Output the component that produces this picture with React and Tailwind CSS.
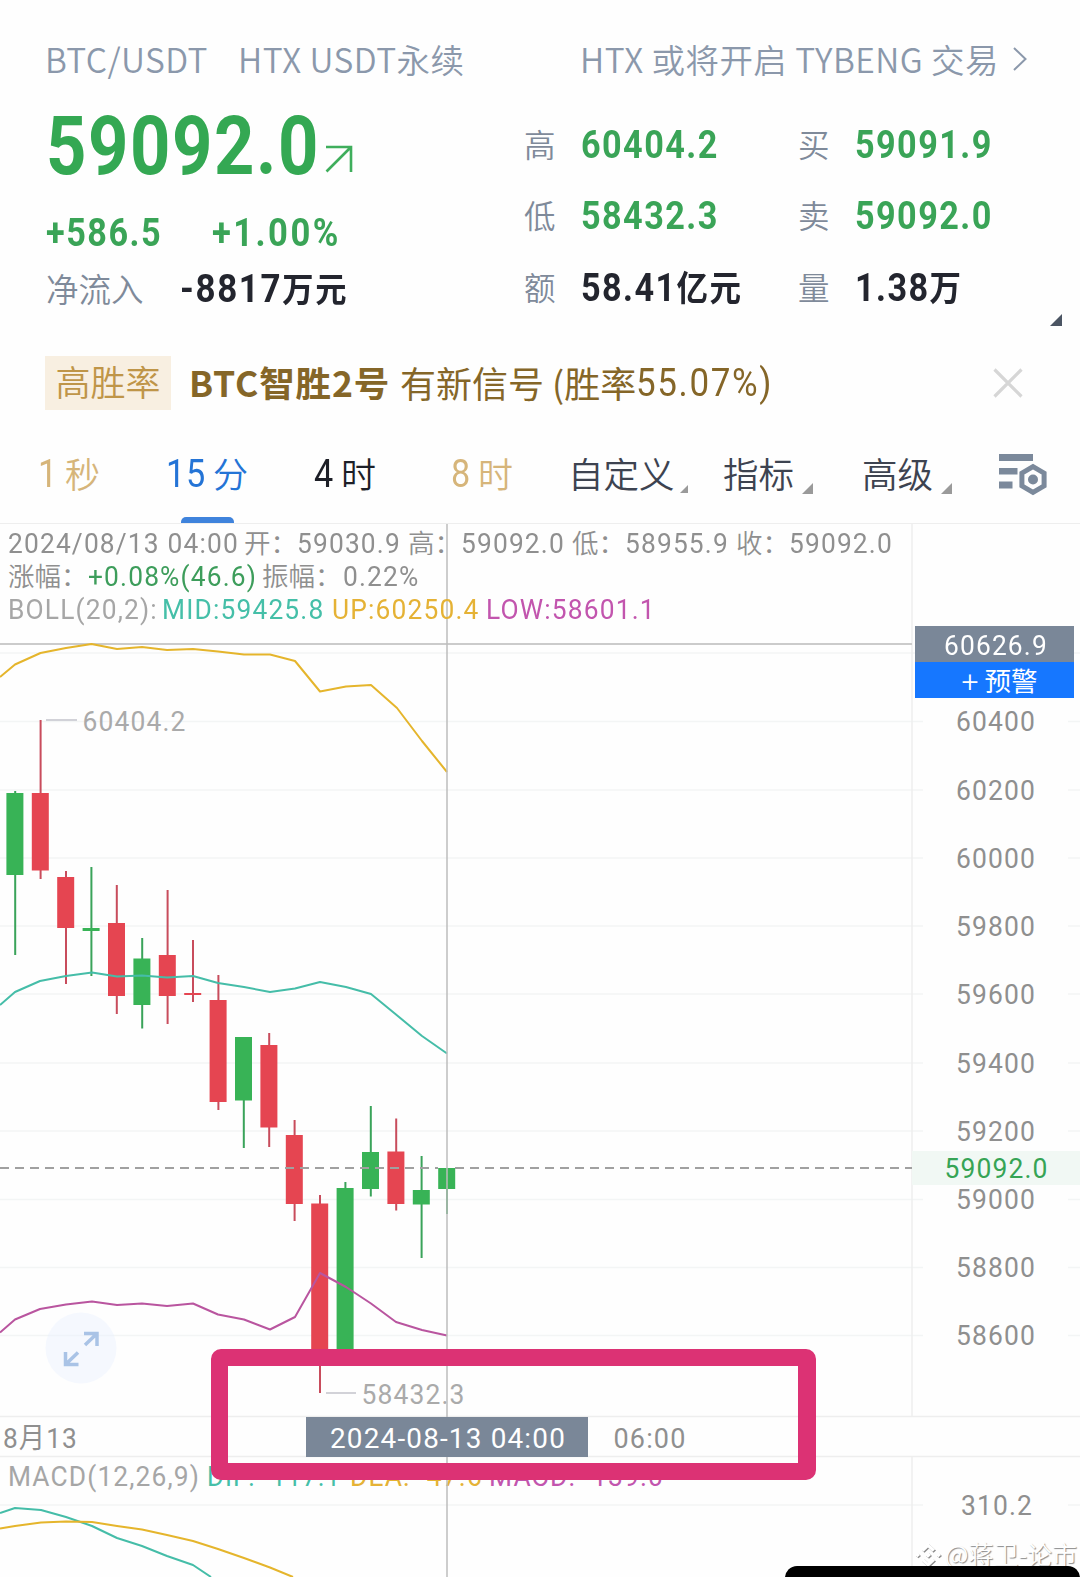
const NUM = "font-['Roboto','Noto_Sans_CJK_SC',sans-serif]";
const COND = "inline-block origin-left scale-x-[.94] tracking-[1.25px] font-normal";

const STEP = 25.4;
const candles = [
  ["g", 791, 955, 793, 875],
  ["r", 720, 879, 793, 870.5],
  ["r", 871, 984, 877, 928],
  ["g", 867, 976, 928, 931],
  ["r", 885, 1014, 923, 996],
  ["g", 938, 1028.5, 958.5, 1005],
  ["r", 890, 1024, 955, 996],
  ["r", 940, 1002, 993, 995],
  ["r", 975, 1110, 1000, 1102],
  ["g", 1037, 1148, 1037, 1100.5],
  ["r", 1033, 1147, 1045, 1127.5],
  ["r", 1120, 1221, 1135, 1204],
  ["r", 1195, 1393, 1203.5, 1352],
  ["g", 1182, 1352, 1188, 1352],
  ["g", 1106, 1196.5, 1152, 1189],
  ["r", 1118.5, 1210.5, 1151.5, 1204],
  ["g", 1156, 1258, 1190, 1204.5],
  ["g", 1168, 1214, 1168, 1189],
];

const axis = [
  ["60400", 721.5],
  ["60200", 790],
  ["60000", 858],
  ["59800", 926],
  ["59600", 994],
  ["59400", 1063],
  ["59200", 1131],
  ["59000", 1199.5],
  ["58800", 1267.5],
  ["58600", 1335.5],
];

const UP =
  "0,677 15,664.5 40.5,653 66,648 91.5,644 117,649 142,647 167,650 193,649 218,651.5 244,654.5 270,654.5 295,661 320,691.5 346,686.5 371,685 397,708 422,741 447,772";
const MID =
  "0,1005 15,992 40,981 66,976 92,972.5 117,976.5 142,975.5 167,977.5 193,976 218,983 244,987 270,992 295,988.5 320,982 346,987 371,994 396,1014.5 422,1036 447,1053.5";
const LOW =
  "0,1332.5 15,1319.5 40,1309 66,1304.5 92,1301.5 117,1305 142,1303.5 167,1306 193,1303.5 218,1314.5 244,1319.5 270,1329.5 295,1317 320,1273 346,1287 371,1303.5 396,1322 422,1330 447,1335.5";
const DIF =
  "0,1513 15,1508 41,1510 66,1517 92,1526 117,1538 142,1546 167,1556 193,1565 211,1577";
const DEA =
  "0,1528.5 15,1526 41,1522.5 66,1521.5 92,1522 117,1526 142,1529.5 167,1535 193,1541 218,1549 244,1558 270,1567.5 293,1577";

function Label({ x, y, w, children, className = "fill-[#8f8f8f]" }) {
  return (
    <text
      x={x}
      y={y}
      textLength={w}
      lengthAdjust="spacingAndGlyphs"
      className={`text-[28px] tracking-[1.2px] font-['Roboto','Noto_Sans_CJK_SC',sans-serif] ${className}`}
    >
      {children}
    </text>
  );
}

function Corner({ className }) {
  return (
    <svg viewBox="0 0 10 10" preserveAspectRatio="none" className={className}>
      <path d="M10 0V10H0Z" fill="currentColor" />
    </svg>
  );
}

function Stat({ label, value, dark }) {
  return (
    <div className="flex h-10 items-center">
      <span className="w-[57px] shrink-0 text-[31.500px] font-[350] text-[#7f8a9a]">{label}</span>
      <span
        className={`mt-[3px] inline-block origin-left scale-x-[.9] tracking-[1.6px] whitespace-nowrap text-[38px] font-bold ${NUM} ${
          dark ? "text-[#23252e]" : "text-[#3aa457]"
        }`}
      >
        {value}
      </span>
    </div>
  );
}

function Header() {
  return (
    <header className="h-[340px] pt-[36px]">
      <div className="flex h-[46px] items-center text-[33.500px] font-[350] text-[#8b98ab]">
        <span className="ml-[45px] w-[193px] tracking-[.4px] whitespace-nowrap">BTC/USDT</span>
        <span className="w-[342px] tracking-[.45px] whitespace-nowrap">HTX USDT永续</span>
        <span className="w-[432px] tracking-[.45px] whitespace-nowrap">HTX 或将开启 TYBENG 交易</span>
        <svg width="16" height="24" viewBox="0 0 16 24" fill="none" stroke="currentColor" strokeWidth="2">
          <path d="M2 1L13.500 12L2 23" />
        </svg>
      </div>
      <div className="flex pt-[2px]">
        <div className="w-[524px] pl-[46px]">
          <div className="flex h-[122px] items-center">
            <span className={`mt-[3px] inline-block w-[279px] origin-left scale-x-[.87] tracking-[1.8px] text-[81px] leading-none font-bold text-[#34a853] ${NUM}`}>
              59092.0
            </span>
            <svg width="28" height="28" viewBox="0 0 28 28" fill="none" stroke="#3fae5c" strokeWidth="2.6" className="mt-[28px]">
              <path d="M1 2H26V27M26 2L1.500 26.500" />
            </svg>
          </div>
          <div className={`flex h-[52px] items-center pt-[2px] text-[38px] font-bold text-[#3aa457] ${NUM}`}>
            <span className="inline-block w-[166px] origin-left scale-x-[.9] tracking-[1.7px]">+586.5</span>
            <span className="inline-block origin-left scale-x-[.91] tracking-[2.700px]">+1.00%</span>
          </div>
          <div className="flex h-[60px] items-center">
            <span className="w-[134px] text-[32.500px] font-[350] text-[#7f8a9a]">净流入</span>
            <span className={`mt-[2px] inline-block origin-left scale-x-[.92] tracking-[1.8px] text-[38px] font-bold whitespace-nowrap text-[#23252e] ${NUM}`}>
              -8817<span className="text-[34px]">万元</span>
            </span>
          </div>
        </div>
        <div className="grid grid-cols-[274px_200px] grid-rows-[71px_72px_60px] pt-10">
          <Stat label="高" value="60404.2" />
          <Stat label="买" value="59091.9" />
          <Stat label="低" value="58432.3" />
          <Stat label="卖" value="59092.0" />
          <Stat label="额" value={<>58.41<span className="text-[35px]">亿元</span></>} dark />
          <Stat label="量" value={<>1.38<span className="text-[35px]">万</span></>} dark />
        </div>
        <Corner className="mt-[230px] ml-[52px] h-[12px] w-[12px] shrink-0 text-[#4b5563]" />
      </div>
    </header>
  );
}

function Banner() {
  return (
    <div className="flex h-[86px] items-center pl-[45px] text-[35px] whitespace-nowrap text-[#856628]">
      <span className="flex h-[54px] w-[126px] items-center justify-center bg-[#f8efe1] pb-[4px] font-[350] text-[#bf9548]">
        高胜率
      </span>
      <span className="ml-[18px] w-[211px] pb-[2px] text-[35.500px] font-bold tracking-[.9px]">BTC智胜2号</span>
      <span className="flex w-[593px] items-center pb-[2px] text-[36px] font-normal">
        有新信号 (胜率
        <span className={`mt-[2px] inline-block origin-left scale-x-[.92] tracking-[1.8px] text-[38px] ${NUM}`}>55.07%)</span>
      </span>
      <svg width="30" height="30" viewBox="0 0 30 30" stroke="#d6d6d6" strokeWidth="3.2">
        <path d="M1.500 1.500L28.500 28.500M28.500 1.500L1.500 28.500" />
      </svg>
    </div>
  );
}

function Period({ n, unit, wide }) {
  return (
    <span className="flex items-center pb-[2px]">
      <span className={`${wide ? "w-[47px]" : "w-[27px]"} shrink-0 pt-[2px] text-[38px] font-normal ${NUM}`}>
        <span className="inline-block origin-left scale-x-[.9] tracking-[1px]">{n}</span>
      </span>
      <span>{unit}</span>
    </span>
  );
}

function Tabs() {
  return (
    <nav className="flex h-[98px] items-center border-b border-[#eeeeee] pl-[38px] text-[35px] font-[350] whitespace-nowrap text-[#3d4350]">
      <span className="w-[128px] text-[#d6b57a]"><Period n="1" unit="秒" /></span>
      <span className="relative flex h-full w-[148px] items-center text-[#2474d6]">
        <Period n="15" unit="分" wide />
        <i className="absolute bottom-0 left-[15px] h-[6px] w-[53px] rounded-t-[5px] bg-[#3f83dc]" />
      </span>
      <span className="w-[137px] text-[#1d1f27]"><Period n="4" unit="时" /></span>
      <span className="w-[117px] text-[#d6b57a]"><Period n="8" unit="时" /></span>
      <span className="w-[112px] pb-[4px] text-[35.500px]">自定义</span>
      <Corner className="mt-[28px] h-[8px] w-[8px] text-[#9a9a9a]" />
      <span className="ml-[35px] w-[79px] pb-[4px] text-[35.500px]">指标</span>
      <Corner className="mt-[28px] h-[11px] w-[11px] text-[#9a9a9a]" />
      <span className="ml-[49px] w-[79px] pb-[4px] text-[35.500px]">高级</span>
      <Corner className="mt-[28px] h-[11px] w-[11px] text-[#9a9a9a]" />
      <svg width="49" height="42" viewBox="0 0 49 42" className="mt-px ml-[47px]" fill="#7b899b">
        <path d="M0 0H34V7H0ZM0 14H18.500V20.500H0ZM0 27.500H13.500V34.500H0Z" />
        <path d="M34 12.700L45.100 19.100V31.900L34 38.300L22.900 31.900V19.100Z" fill="none" stroke="#7b899b" strokeWidth="5" />
        <circle cx="34" cy="25.500" r="5" />
      </svg>
    </nav>
  );
}

function Legend() {
  return (
    <div className={`absolute top-px left-0 w-full text-[28px] leading-[33px] font-[350] whitespace-pre text-[#8f8f8f] ${NUM}`}>
      <div className="flex h-[33px] items-center pl-[8px] pt-[4px]">
        <span className="w-[236px]"><span className={COND}>2024/08/13 04:00</span></span>
        {[["开", "59030.9"], ["高", "59092.0"], ["低", "58955.9"], ["收", "59092.0"]].map(([k, v]) => (
          <span key={k} className="flex w-[164px]">
            <span className="w-[53px] text-[26.500px]">{k}：</span>
            <span className={COND}>{v}</span>
          </span>
        ))}
      </div>
      <div className="flex h-[33px] items-center pl-[8px] pt-[4px]">
        <span className="w-[80px] text-[26.500px]">涨幅：</span>
        <span className="w-[174px] text-[#3d9d5b]"><span className={COND}>+0.08%(46.6)</span></span>
        <span className="w-[81px] text-[26.500px]">振幅：</span>
        <span className={COND}>0.22%</span>
      </div>
      <div className="flex h-[33px] items-center pl-[8px] pt-[4px]">
        <span className="w-[154px] text-[#a6a6a6]"><span className={COND}>BOLL(20,2):</span></span>
        <span className="w-[170px] text-[#45bfa8]"><span className={COND}>MID:59425.8</span></span>
        <span className="w-[154px] text-[#e5b235]"><span className={COND}>UP:60250.4</span></span>
        <span className="text-[#c255ae]"><span className={COND}>LOW:58601.1</span></span>
      </div>
    </div>
  );
}

function Chart() {
  return (
    <section className="relative h-[1053px] overflow-hidden">
      <svg viewBox="0 524 1080 1053" className="block h-[1053px] w-[1080px]">
        <g stroke="#f3f5f5" strokeWidth="1.500">
          {[653, ...axis.map((a) => a[1]), 1505].map((y) => (
            <path key={y} d={`M0 ${y}H923M1068 ${y}H1080`} />
          ))}
          <path d="M0 1416.500H1080M0 1456.500H1080" stroke="#eeeeee" />
          <path d="M912 524V1416M912 1457V1577" stroke="#eeeeee" />
        </g>
        {axis.map(([t, y]) => (
          <Label key={t} x="956" y={y + 9.5} w="80">{t}</Label>
        ))}
        <Label x="961" y="1515" w="72">310.2</Label>

        <rect x="912" y="1151" width="168" height="34" fill="#f1f8f4" />
        <Label x="944.500" y="1178" w="104" className="fill-[#36a455]">59092.0</Label>

        <Label x="82.500" y="731" w="104" className="fill-[#aaaaaa]">60404.2</Label>
        <path d="M46 720H77M326 1393H356" stroke="#c4c4cc" strokeWidth="1.500" />
        <Label x="361.500" y="1404" w="104" className="fill-[#aaaaaa]">58432.3</Label>

        <path d="M0 644H912" stroke="#cbcbcb" strokeWidth="2" />

        {candles.map(([c, wt, wb, bt, bb], i) => {
          const x = 15.2 + i * STEP;
          return (
            <g key={i} fill={c === "g" ? "#38b356" : "#e54551"}>
              <rect x={x - 1} y={wt} width="2" height={wb - wt} fill={c === "g" ? "#3aa35a" : "#c84c5c"} />
              <rect x={x - 8.8} y={bt} width="17" height={bb - bt} />
            </g>
          );
        })}
        <path d="M0 1168H438M455 1168H912" stroke="#a0a0a0" strokeWidth="1.800" strokeDasharray="9 6" />

        <g fill="none" strokeWidth="2" strokeLinejoin="round">
          <polyline points={UP} stroke="#e5b52c" />
          <polyline points={MID} stroke="#45bda8" />
          <polyline points={LOW} stroke="#b9559f" />
          <polyline points={DIF} stroke="#45bda8" />
          <polyline points={DEA} stroke="#e5b52c" />
        </g>

        <circle cx="81" cy="1348" r="35.500" fill="#e8f1ff" fillOpacity=".4" />
        <path
          d="M84 1333.500H97V1346M97 1333.500L85 1345M65.500 1352V1364.500H78.500M65.500 1364.500L78 1352.500"
          fill="none"
          stroke="#a9c3e6"
          strokeWidth="3.500"
        />

        <Label x="3" y="1448" w="75">8月13</Label>
        <Label x="613.500" y="1448" w="73">06:00</Label>
        <Label x="8" y="1486" w="192" className="fill-[#a6a6a6]">MACD(12,26,9)</Label>
        <Label x="207" y="1486" w="134" className="fill-[#45bfa8]">DIF: -117.1</Label>
        <Label x="350" y="1486" w="133" className="fill-[#e5b235]">DEA: -47.6</Label>
        <Label x="489" y="1486" w="175" className="fill-[#c255ae]">MACD: -139.0</Label>
        <path d="M447 524V1577" stroke="#bcbcbc" strokeWidth="1.500" />
        <rect x="306" y="1417" width="282" height="40" fill="#7a8798" />
        <Label x="330" y="1448" w="236" className="fill-white">2024-08-13 04:00</Label>
      </svg>

      <Legend />

      <div className={`absolute top-[102px] left-[915px] w-[159px] text-white ${NUM}`}>
        <div className="flex h-9 items-center bg-[#7a8798] pt-[3px] pl-[29px] text-[28px]">
          <span className={COND}>60626.9</span>
        </div>
        <div className="flex h-9 items-center justify-center bg-[#1677ff] pt-[3px] pl-2.5 text-[26.500px]">
          <span className="mr-1.5 text-[30px] font-light">+</span>预警
        </div>
      </div>

      <div className="absolute top-[824.500px] left-[211px] h-[131.500px] w-[605px] rounded-[10px] border-[17.500px] border-r-[18px] border-[#dc3274]" />

      <div className="absolute top-[1010px] left-[914px] flex items-center gap-[3px] text-[25px] leading-[38px] font-[350] whitespace-nowrap text-white [text-shadow:1px_1px_1px_#8a8a8a]">
        <svg width="28" height="26" viewBox="0 0 28 28" preserveAspectRatio="none" fill="white" className="mt-[4px] drop-shadow-[1px_1px_0.5px_#8a8a8a]">
          <path d="M14 1L21 8L18.500 10.500L14 6L9.500 10.500L7 8ZM3.500 11.500L6 14L3.500 16.500L1 14ZM24.500 11.500L27 14L24.500 16.500L22 14ZM14 11L17 14L14 17L11 14ZM9.500 17.500L14 22L18.500 17.500L21 20L14 27L7 20Z" />
        </svg>
        @蒋卫-论市
      </div>
      <div className="absolute top-[1042px] left-[785px] h-8 w-[295px] rounded-t-[12px] bg-black" />
    </section>
  );
}

export default function App() {
  return (
    <main className="h-[1577px] w-[1080px] overflow-hidden bg-[#fefefe] font-['Noto_Sans_CJK_SC',sans-serif]">
      <Header />
      <Banner />
      <Tabs />
      <Chart />
    </main>
  );
}
